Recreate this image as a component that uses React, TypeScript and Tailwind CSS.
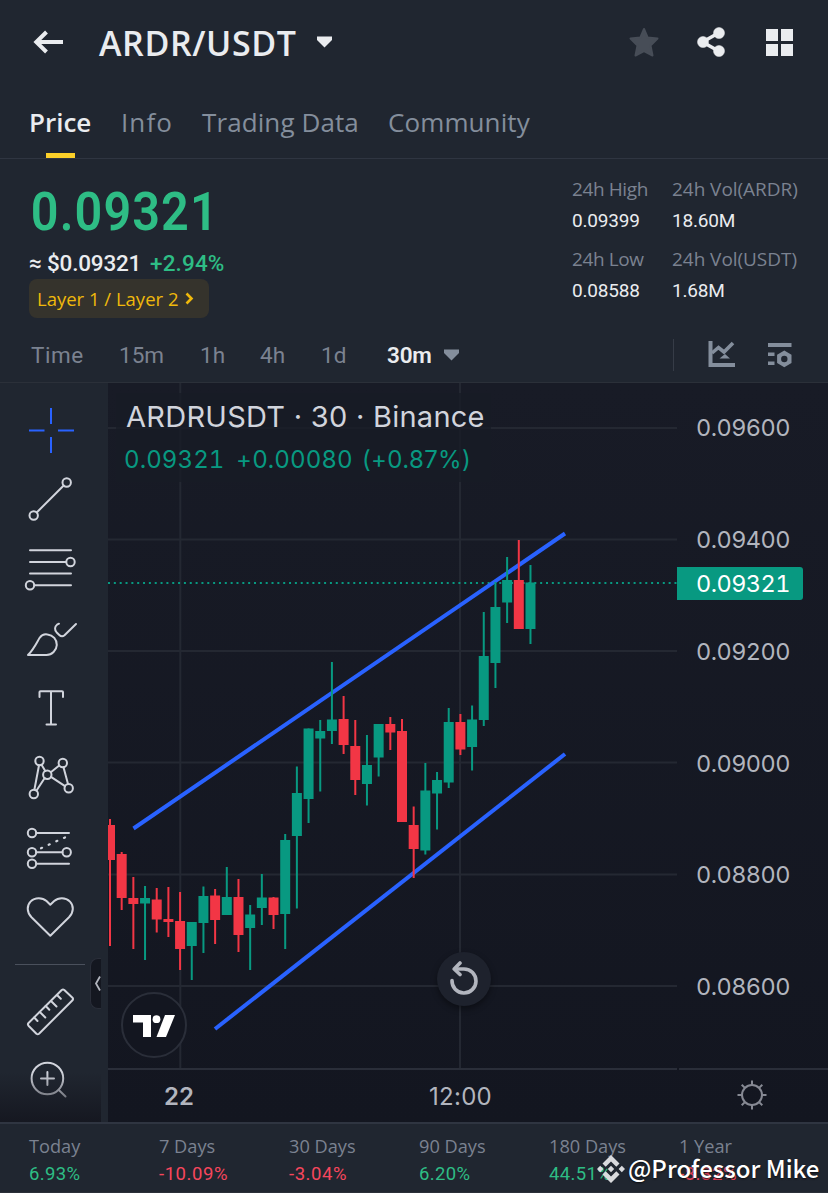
import React from "react";

type Candle = [number, number, number, number, boolean];

// [high, body top, body bottom, low, rising]
const candles: Candle[] = [
  [819, 825, 860, 946, false],
  [852, 854, 898, 910, false],
  [877, 898, 904, 949, false],
  [886, 898, 903.5, 960, true],
  [888, 899.5, 919.5, 932.5, false],
  [887, 919, 922, 937, false],
  [892, 921, 949, 970, false],
  [922, 922, 946, 980, true],
  [886.5, 896, 923, 953, true],
  [889, 895.5, 920, 944, false],
  [867, 897, 915, 915, true],
  [879, 897, 935, 952, false],
  [905, 914.5, 928, 970, true],
  [874, 897.5, 908, 925, true],
  [897, 897.5, 915, 929, false],
  [834, 840, 914, 949, true],
  [766.5, 793, 836, 908.5, true],
  [728.5, 728.5, 799, 823, true],
  [720, 731, 738.5, 791.5, true],
  [662, 719.5, 731, 744, true],
  [696, 719, 745, 754, false],
  [720, 746, 780, 795, false],
  [735, 765, 784, 805.5, true],
  [724, 724, 757.5, 776.5, true],
  [717, 724, 732.5, 750, false],
  [719, 731, 822, 822, false],
  [806.5, 825, 849, 878, false],
  [763, 790.5, 850.5, 854.5, true],
  [772, 780, 793.5, 829.5, true],
  [708, 722, 782.5, 788, true],
  [714, 722, 749.5, 755, false],
  [705.5, 719.5, 747, 770.5, true],
  [612, 656, 720, 726, true],
  [582, 607, 663, 688, true],
  [557, 580, 602.5, 623, true],
  [540, 580, 629, 629, false],
  [565, 582.5, 629, 644, true],
];

const gridY = [428, 539.5, 651, 762.5, 874.5, 986];
const priceLabels = ["0.09600", "0.09400", "0.09200", "0.09000", "0.08800", "0.08600"];

const stats = [
  { label: "24h High", value: "0.09399" },
  { label: "24h Vol(ARDR)", value: "18.60M" },
  { label: "24h Low", value: "0.08588" },
  { label: "24h Vol(USDT)", value: "1.68M" },
];

const performance = [
  { label: "Today", value: "6.93%", up: true },
  { label: "7 Days", value: "-10.09%", up: false },
  { label: "30 Days", value: "-3.04%", up: false },
  { label: "90 Days", value: "6.20%", up: true },
  { label: "180 Days", value: "44.51%", up: true },
  { label: "1 Year", value: "-8.32%", up: false },
];

const tools: { name: string; y: number; h: number; art: React.ReactNode }[] = [
  {
    name: "Crosshair",
    y: 395,
    h: 70,
    art: (
      <path stroke="#2962ff" strokeLinecap="butt" d="M51 408v16M51 437v16M29 430.5h15.500M58 430.500h16" />
    ),
  },
  {
    name: "Trend line",
    y: 465,
    h: 69,
    art: (
      <>
        <circle cx="66.700" cy="482.500" r="4.200" />
        <circle cx="33.700" cy="515.500" r="4.200" />
        <path d="M36.700 512.500L63.700 485.500" />
      </>
    ),
  },
  {
    name: "Fibonacci",
    y: 534,
    h: 70,
    art: (
      <>
        <path d="M30 550.300H71M30 562H66M30 573.500H71M34.500 585.200H71" />
        <circle cx="70.500" cy="562" r="4.200" />
        <circle cx="30" cy="585.200" r="4.200" />
      </>
    ),
  },
  {
    name: "Brush",
    y: 604,
    h: 69,
    art: (
      <>
        <path d="M28 655C34 649 37 642 39.500 638C42 634.500 45 634 47.500 634.500C53 635 57 639.500 56.800 645C56.500 650.500 52 655 46.500 655Z" />
        <path d="M76 624L64.500 635.300C62.800 636.700 60.500 636.200 59 634.700L56.500 632.200C54.500 630 54.500 626.500 57 624.700L59 623.700" />
      </>
    ),
  },
  {
    name: "Text",
    y: 673,
    h: 70,
    art: <path d="M39.500 697V692Q39.500 691.200 40.500 691.200H62Q63 691.200 63 692V697M51 691.200V724.500M46.500 724.500H56" />,
  },
  {
    name: "Pattern",
    y: 743,
    h: 70,
    art: (
      <>
        <circle cx="39.500" cy="761" r="4.200" />
        <circle cx="62.800" cy="763" r="4.200" />
        <circle cx="47.300" cy="774.700" r="4.200" />
        <circle cx="68.700" cy="788.300" r="4.200" />
        <circle cx="33.800" cy="794" r="4.200" />
        <path d="M39 765.200L34.400 789.800M41.500 764.700L45.300 771M59.200 765.500L50.800 772.200M63.500 767.200L68 784.100M51 776.800L65 786.200M44.700 778L36.400 790.700" />
      </>
    ),
  },
  {
    name: "Forecast",
    y: 813,
    h: 69,
    art: (
      <>
        <circle cx="32" cy="833" r="4.200" />
        <circle cx="32" cy="852.300" r="4.200" />
        <circle cx="66.700" cy="852.300" r="4.200" />
        <circle cx="32" cy="863.800" r="4.200" />
        <path d="M36.200 833H69M36.200 852.300H62.500M36.200 863.800H69" />
        <path d="M41 848.300L67 836.500" strokeDasharray="1.200 7.200" strokeWidth="2.200" />
      </>
    ),
  },
  {
    name: "Favorites",
    y: 882,
    h: 70,
    art: (
      <path d="M50.300 935.700L31.500 917.300C26.500 912 26.800 905.500 30.500 901.600C35 897 42.500 897.400 46.500 901L50.300 904.800L54.200 901C58.200 897.400 65.500 897 70 901.600C73.800 905.500 74 912 69 917.300Z" />
    ),
  },
];

function ToolIcon({ y, h, children }: { y: number; h: number; children: React.ReactNode }) {
  return (
    <svg
      width="101"
      height={h}
      viewBox={`0 ${y} 101 ${h}`}
      className="block shrink-0"
      fill="none"
      stroke="#d1d4dc"
      strokeWidth="2"
      strokeLinecap="round"
      strokeLinejoin="round"
    >
      {children}
    </svg>
  );
}

function Header() {
  return (
    <header className="flex h-[84px] shrink-0 items-center pl-[33px] pr-[35px]">
      <svg width="30" height="24" viewBox="0 0 30 24" fill="none" stroke="#eaecef" strokeWidth="4">
        <path d="M30 12H4M13.500 2L3.300 12L13.500 22" />
      </svg>
      <h1 className="ml-[36px] w-[200px] whitespace-nowrap pt-[2px] font-['Open_Sans',sans-serif] text-[34px] font-semibold leading-[40px] tracking-[0.6px] text-[#eaecef]">
        ARDR/USDT
      </h1>
      <svg width="17" height="12" viewBox="0 0 17 12" fill="#eaecef" className="ml-[17px]">
        <path d="M1 0.500H16V4L8.500 11.500L1 4Z" />
      </svg>
      <div className="ml-auto flex items-center">
        <svg width="30" height="31" viewBox="0 0 30 31" fill="#474d57" stroke="#474d57" strokeWidth="2" strokeLinejoin="round">
          <path d="M15 2L18.600 10.500L28.500 11.500L21.500 18.500L23.500 28.500L15 24L6.500 28.500L8.500 18.500L1.500 11.500L11.400 10.500Z" />
        </svg>
        <svg width="30" height="30" viewBox="0 0 30 30" fill="#eaecef" stroke="#eaecef" className="ml-[37px]">
          <path d="M6.500 15L22.500 6M6.500 15L22.500 24" strokeWidth="3.500" />
          <circle cx="7" cy="15" r="5.500" strokeWidth="0.500" />
          <circle cx="23" cy="6" r="5.500" strokeWidth="0.500" />
          <circle cx="23" cy="24" r="5.500" strokeWidth="0.500" />
        </svg>
        <div className="ml-[40px] grid grid-cols-2 gap-[3px]">
          <span className="size-[12px] bg-[#eaecef]" />
          <span className="size-[12px] bg-[#eaecef]" />
          <span className="size-[12px] bg-[#eaecef]" />
          <span className="size-[12px] bg-[#eaecef]" />
        </div>
      </div>
    </header>
  );
}

function Tabs() {
  return (
    <nav className="flex h-[75px] shrink-0 border-b border-[#2f3541] pl-[29px] pt-[19px] font-['Open_Sans',sans-serif] text-[26px] font-medium leading-[38px] text-[#848e9c]">
      <div className="flex w-[92px] flex-col">
        <span className="whitespace-nowrap font-semibold text-[#eaecef]">Price</span>
        <span className="ml-[17px] mt-[12px] h-[5px] w-[29px] shrink-0 bg-[#fcd029]" />
      </div>
      <span className="w-[81px] whitespace-nowrap tracking-[1.1px]">Info</span>
      <span className="w-[186px] whitespace-nowrap tracking-[0.1px]">Trading Data</span>
      <span className="whitespace-nowrap tracking-[0.1px]">Community</span>
    </nav>
  );
}

function Summary() {
  return (
    <section className="flex h-[169px] shrink-0 justify-between pl-[29px]">
      <div>
        <div className="mt-[24px] origin-left scale-x-[0.9] whitespace-nowrap pl-[2px] font-[Roboto,sans-serif] text-[54px] font-semibold leading-[58px] tracking-[1.2px] text-[#2ebd85]">
          0.09321
        </div>
        <div className="mt-[7px] flex font-[Roboto,sans-serif] text-[22.5px] font-medium leading-[30px]">
          <span className="w-[121px] whitespace-nowrap tracking-[-0.2px] text-[#eaecef]">≈ $0.09321</span>
          <span className="whitespace-nowrap tracking-[0.15px] text-[#2ebd85]">+2.94%</span>
        </div>
        <div className="mt-[1px] flex h-[39px] w-[180px] items-center rounded-[8px] bg-[#35332c] pl-[8px] font-['Open_Sans',sans-serif] text-[18.5px] text-[#f0b90b]">
          <span className="whitespace-nowrap">Layer 1 / Layer 2</span>
          <svg width="9" height="13" viewBox="0 0 9 13" fill="none" stroke="#f0b90b" strokeWidth="2.600" className="ml-[7px]">
            <path d="M1.500 1.500L6.500 6.500L1.500 11.500" />
          </svg>
        </div>
      </div>
      <dl className="grid w-[256px] grid-cols-[100px_156px] content-start pt-[17px]">
        {stats.map((s) => (
          <div key={s.label} className="h-[70px]">
            <dt
              className={
                s.label.includes("Vol")
                  ? "whitespace-nowrap font-['Open_Sans',sans-serif] text-[19px] leading-[26px] tracking-[-0.05px] text-[#7b8290]"
                  : "whitespace-nowrap font-['Open_Sans',sans-serif] text-[19px] leading-[26px] tracking-[-0.4px] text-[#7b8290]"
              }
            >
              {s.label}
            </dt>
            <dd className="mt-[6px] whitespace-nowrap font-[Roboto,sans-serif] text-[19px] leading-[26px] tracking-[-0.2px] text-[#eaecef]">
              {s.value}
            </dd>
          </div>
        ))}
      </dl>
    </section>
  );
}

function Intervals() {
  return (
    <div className="flex h-[55px] shrink-0 items-center border-b border-[#2b3039] pl-[31px] font-[Roboto,sans-serif] text-[22.5px] text-[#7b8290]">
      <span className="w-[88px] pt-[2px] tracking-[0.5px]">Time</span>
      <span className="w-[81px] pt-[2px]">15m</span>
      <span className="w-[60px] pt-[2px]">1h</span>
      <span className="w-[61px] pt-[2px]">4h</span>
      <span className="w-[66px] pt-[2px]">1d</span>
      <span className="w-[56px] pt-[2px] font-semibold tracking-[-0.2px] text-[#eaecef]">30m</span>
      <svg width="17" height="12" viewBox="0 0 17 12" fill="#848e9c">
        <path d="M1 0.500H16V4L8.500 11.500L1 4Z" />
      </svg>
      <span className="ml-[213px] h-[32px] w-px bg-[#363c47]" />
      <svg width="28" height="28" viewBox="0 0 28 28" fill="none" stroke="#848e9c" strokeWidth="3.600" className="-mt-[2px] ml-[34px]">
        <path d="M2.500 1V25H27" strokeWidth="4" />
        <path d="M4 13L10.500 7.500L16 12L25 3" />
        <path d="M11.500 18.500L17 14L22 18.500Z" fill="#848e9c" stroke="none" />
      </svg>
      <svg width="26" height="26" viewBox="0 0 26 26" fill="#848e9c" className="-mt-px ml-[31px]">
        <path d="M1 1H24.500V5H1ZM1 10.500H7.500V14H1ZM1 19.500H7.500V23H1Z" />
        <path
          fillRule="evenodd"
          d="M17.300 8.500L24.500 12.700V21L17.300 25.300L10.100 21V12.700ZM17.300 13.800A3.200 3.200 0 1 0 17.300 20.200A3.200 3.200 0 1 0 17.300 13.800Z"
        />
      </svg>
    </div>
  );
}

function Toolbar() {
  return (
    <aside className="relative flex w-[108px] shrink-0 flex-col pt-[12px]">
      {tools.map((t) => (
        <ToolIcon key={t.name} y={t.y} h={t.h}>
          {t.art}
        </ToolIcon>
      ))}
      <div className="ml-[15px] mt-[12px] h-px w-[70px] shrink-0 bg-[#4a505c]" />
      <ToolIcon y={965} h={80}>
        <path d="M28.500 1023L61.700 990Q63 989 64.300 990L72.500 997.700Q73.500 999 72.500 1000.300L39 1033.700Q37.700 1034.700 36.400 1033.700L28.500 1025.700Q27.300 1024.300 28.500 1023Z" />
        <path d="M34.200 1017.500L37.500 1021M39.800 1012L45.300 1017.500M45.700 1006L49.300 1009.700M51 1001L56.500 1006.500M57 995L60.800 998.700" />
      </ToolIcon>
      <ToolIcon y={1045} h={77}>
        <circle cx="47.400" cy="1078.500" r="15.800" />
        <path d="M58.800 1090L65.500 1096.500M47.400 1072V1085M41 1078.500H54" />
      </ToolIcon>
      <div className="absolute bottom-0 left-0 h-[50px] w-[101px] bg-gradient-to-b from-[#151720]/0 to-[#151720]/95" />
      <div className="absolute left-[90px] top-[575px] flex h-[51px] w-[11px] items-center justify-end rounded-l-[8px] border border-r-0 border-[#2a2e39] bg-[#141720]">
        <svg width="7" height="15" viewBox="0 0 7 15" fill="none" stroke="#b2b5be" strokeWidth="1.800">
          <path d="M6 0.500L2 7.500L6 14.500" />
        </svg>
      </div>
    </aside>
  );
}

function CandleChart() {
  return (
    <svg width="570" height="685" viewBox="108 383 570 685" className="block">
      <g stroke="#242832" strokeWidth="2">
        {gridY.map((y) => (
          <line key={y} x1="108" x2="677" y1={y} y2={y} />
        ))}
        <line x1="180.300" x2="180.300" y1="383" y2="1068" />
        <line x1="460" x2="460" y1="383" y2="1068" />
      </g>
      <line x1="108" x2="677" y1="583" y2="583" stroke="#089981" strokeWidth="2" strokeDasharray="2 3.840" />
      <g stroke="#2962ff" strokeWidth="4">
        <line x1="133.500" y1="828.500" x2="565" y2="533.500" />
        <line x1="215" y1="1029" x2="565" y2="754" />
      </g>
      {candles.map(([high, top, bottom, low, up], i) => {
        const x = 110 + i * 11.68;
        const color = up ? "#089981" : "#f23645";
        return (
          <g key={i} fill={color}>
            <rect x={x - 1} y={high} width="2" height={low - high} />
            <rect x={x - 5} y={top} width="10" height={bottom - top} />
          </g>
        );
      })}
    </svg>
  );
}

function Chart() {
  return (
    <div className="flex w-[720px] flex-col bg-gradient-to-b from-[#181b26] to-[#131620]">
      <div className="flex h-[685px] shrink-0">
        <div className="relative w-[570px] shrink-0">
          <CandleChart />
          <div className="absolute left-[8px] top-[10px] h-[89px] w-[375px] bg-[#181b26]/80 pl-[8px] font-[Inter,sans-serif]">
            <div className="mt-[6px] whitespace-nowrap pl-[2px] text-[29px] leading-[36px] tracking-[0.26px] text-[#d1d4dc]">
              ARDRUSDT · 30 · Binance
            </div>
            <div className="mt-[10px] flex whitespace-nowrap text-[24px] leading-[30px] text-[#089981]">
              <span className="w-[112px] tabular-nums tracking-[0.1px]">0.09321</span>
              <span className="w-[126px] tracking-[0.6px]">+0.00080</span>
              <span className="tracking-[0.35px]">(+0.87%)</span>
            </div>
          </div>
          <div className="absolute left-[329px] top-[569px] flex size-[54px] items-center justify-center rounded-full bg-[#1e222d] shadow-[0_3px_6px_rgba(0,0,0,0.4)]">
            <svg width="30" height="34" viewBox="0 0 30 34" fill="none" stroke="#b2b5be" strokeWidth="3.600" strokeLinecap="round" strokeLinejoin="round" className="-mt-[2px]">
              <path d="M3 19.500A12 12 0 1 0 15 8H6.500" />
              <path d="M11 2L5.200 8L11 13.500" />
            </svg>
          </div>
          <div className="absolute left-[13px] top-[609px] flex size-[66px] items-center justify-center rounded-full border-2 border-[#2a2e39] bg-[#131620]">
            <svg width="42" height="22" viewBox="0 0 42 22" fill="#ffffff" className="mt-[2px]">
              <path d="M0 0H18V22H10V7.500H0Z" />
              <circle cx="23.500" cy="4.200" r="3.900" />
              <path d="M32 0H42L33 22H23.500Z" />
            </svg>
          </div>
        </div>
        <div className="relative w-[150px] font-[Inter,sans-serif] text-[23.5px] tabular-nums tracking-[-0.55px] text-[#b2b5be]">
          <div className="-mt-[11px] flex flex-col pl-[18px]">
            {priceLabels.map((p) => (
              <span key={p} className="flex h-[111.8px] items-center">
                {p}
              </span>
            ))}
          </div>
          <div className="absolute -left-px top-[184px] flex h-[33px] w-[126px] items-center rounded-r-[3px] bg-[#089981] pl-[19px] text-white">
            0.09321
          </div>
        </div>
      </div>
      <div className="flex flex-1 font-[Inter,sans-serif] text-[24px] text-[#b2b5be]">
        <div className="flex w-[569px] border-t-2 border-[#2a2e39]">
          <span className="ml-[35px] w-[72px] pt-[9px] text-center font-semibold">22</span>
          <span className="ml-[195px] w-[101px] whitespace-nowrap pt-[9px] text-center tracking-[0.3px]">12:00</span>
        </div>
        <div className="ml-[2px] flex flex-1 justify-center border-t-2 border-[#2a2e39] pr-[3px] pt-[9px]">
          <svg width="32" height="32" viewBox="-16 -16 32 32" fill="none" stroke="#868993" strokeWidth="2">
            <circle r="10" />
            <path d="M0 -10V-14.500M0 10V14.500M-10 0H-14.500M10 0H14.500M7.100 -7.100L10.300 -10.300M-7.100 -7.100L-10.300 -10.300M7.100 7.100L10.300 10.300M-7.100 7.100L-10.300 10.300" />
          </svg>
        </div>
      </div>
    </div>
  );
}

function Performance() {
  return (
    <footer className="relative flex flex-1 border-b border-t-2 border-b-[#2b3039] border-t-[#2f3541] pl-[29px] pt-[10px]">
      {performance.map((p) => (
        <div key={p.label} className="w-[130px] shrink-0 whitespace-nowrap">
          <div className="font-['Open_Sans',sans-serif] text-[18.2px] leading-[24px] text-[#7b8290]">{p.label}</div>
          <div
            className={
              p.up
                ? "mt-[4px] font-[Roboto,sans-serif] text-[18.5px] leading-[24px] tracking-[0.35px] text-[#2ebd85]"
                : "mt-[4px] font-[Roboto,sans-serif] text-[18.5px] leading-[24px] tracking-[0.55px] text-[#f6465d]"
            }
          >
            {p.value}
          </div>
        </div>
      ))}
      <div className="absolute left-[597px] top-[29px] flex items-center">
        <svg width="28" height="28" viewBox="0 0 28 28" fill="#d9dadd" className="mt-[2px]">
          <path d="M14 0L22.500 8.500L19.300 11.700L14 6.400L8.700 11.700L5.500 8.500Z" />
          <path d="M14 28L22.500 19.500L19.300 16.300L14 21.600L8.700 16.300L5.500 19.500Z" />
          <path d="M14 10.800L17.200 14L14 17.200L10.800 14ZM3.200 10.800L6.400 14L3.200 17.200L0 14ZM24.800 10.800L28 14L24.800 17.200L21.600 14Z" />
        </svg>
        <span className="ml-[3px] whitespace-nowrap font-['Noto_Sans_CJK_SC',sans-serif] text-[24px] font-medium leading-[30px] text-white [text-shadow:0_1px_2px_rgba(0,0,0,0.7)]">
          @Professor Mike
        </span>
      </div>
    </footer>
  );
}

export default function App() {
  return (
    <div className="flex h-[1193px] w-[828px] flex-col overflow-hidden bg-[#202630]">
      <Header />
      <Tabs />
      <Summary />
      <Intervals />
      <main className="flex h-[739px] shrink-0">
        <Toolbar />
        <Chart />
      </main>
      <Performance />
    </div>
  );
}
